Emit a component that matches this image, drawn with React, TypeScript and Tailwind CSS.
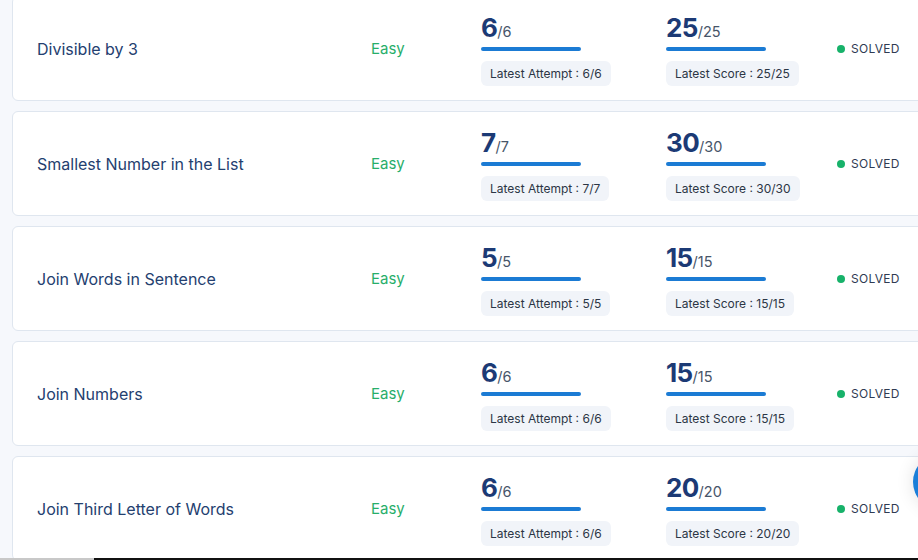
import React from "react";

type Problem = {
  title: string;
  level: string;
  attempt: number;
  attemptMax: number;
  score: number;
  scoreMax: number;
};

const problems: Problem[] = [
  { title: "Divisible by 3", level: "Easy", attempt: 6, attemptMax: 6, score: 25, scoreMax: 25 },
  { title: "Smallest Number in the List", level: "Easy", attempt: 7, attemptMax: 7, score: 30, scoreMax: 30 },
  { title: "Join Words in Sentence", level: "Easy", attempt: 5, attemptMax: 5, score: 15, scoreMax: 15 },
  { title: "Join Numbers", level: "Easy", attempt: 6, attemptMax: 6, score: 15, scoreMax: 15 },
  { title: "Join Third Letter of Words", level: "Easy", attempt: 6, attemptMax: 6, score: 20, scoreMax: 20 },
];

const Stat = ({ value, max, label }: { value: number; max: number; label: string }) => {
  return (
    <div className="flex flex-col items-start">
      <div className="flex items-baseline leading-[30px] h-[30px]">
        <span className="text-[26px] font-bold text-[#1c3a75] tracking-tight">{value}</span>
        <span className="text-[14.5px] text-[#475569]">/{max}</span>
      </div>
      <div className="mt-[4px] h-[4px] w-[100px] rounded-full bg-[#1b7bd4]" />
      <div className="mt-[10px] h-[25px] rounded-md bg-[#f1f4f9] px-[9px] flex items-center text-[12px] text-[#2c3645]">
        {label} : {value}/{max}
      </div>
    </div>
  );
};

const ProblemCard = ({ p }: { p: Problem }) => {
  return (
    <div className="h-[105px] w-[960px] shrink-0 rounded-md border border-[#dfe6ef] bg-white flex items-center pl-[24px]">
      <div className="w-[334px] text-[16px] font-normal text-[#24406f]">{p.title}</div>
      <div className="w-[110px] text-[15px] text-[#27ae6a] pt-[2px]">{p.level}</div>
      <div className="w-[185px] pt-[2px]">
        <Stat value={p.attempt} max={p.attemptMax} label="Latest Attempt" />
      </div>
      <div className="w-[171px] pt-[2px]">
        <Stat value={p.score} max={p.scoreMax} label="Latest Score" />
      </div>
      <div className="flex items-center gap-[6px]">
        <span className="h-[8px] w-[8px] rounded-full bg-[#17b26a]" />
        <span className="text-[12px] text-[#2f3b52] tracking-wide">SOLVED</span>
      </div>
    </div>
  );
};

export default function App() {
  return (
    <div
      className="h-[560px] w-[918px] overflow-hidden bg-[#f6f8fc] relative"
      style={{ fontFamily: "Inter, 'Noto Sans', sans-serif" }}
    >
      <div className="-mt-[4px] pl-[12px] flex flex-col gap-[10px]">
        {problems.map((p) => (
          <ProblemCard key={p.title} p={p} />
        ))}
      </div>
      <div className="absolute left-[913px] top-[454px] h-[56px] w-[56px] rounded-full bg-[#1a7fd9] shadow-[0_0_18px_rgba(0,0,0,0.12)]" />
      <div className="absolute bottom-0 left-0 h-[2px] w-[94px] bg-[#c8c8c8]" />
      <div className="absolute bottom-0 left-[94px] right-0 h-[2px] bg-[#111]" />
    </div>
  );
}
